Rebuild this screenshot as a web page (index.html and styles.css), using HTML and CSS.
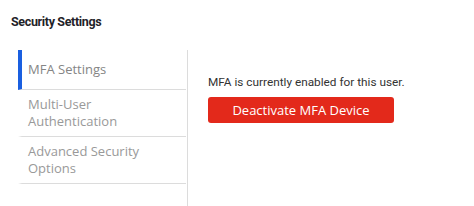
FILE: index.html
```html
<!DOCTYPE html>
<html lang="en">
<head>
    <meta charset="UTF-8">
    <title>Security Settings</title>
    <link rel="stylesheet" href="styles.css">
</head>
<body>

<div class="page">
    <h1 class="page-title">Security Settings</h1>

    <div class="settings">
        <!-- Side menu -->
        <ul class="side-menu">
            <li class="menu-item active">MFA Settings</li>
            <li class="menu-item">Multi-User<br>Authentication</li>
            <li class="menu-item">Advanced Security<br>Options</li>
        </ul>

        <!-- MFA panel -->
        <div class="panel">
            <p class="status">MFA is currently enabled for this user.</p>
            <button class="btn-danger">Deactivate MFA Device</button>
        </div>
    </div>
</div>

</body>
</html>
```

FILE: styles.css
```css
body {
    margin: 0;
    background-color: #ffffff;
    font-family: 'Roboto', sans-serif;
}

.page {
    padding: 14px 0 0 11px;
}

.page-title {
    margin: 0;
    font-size: 12.5px;
    font-weight: 700;
    letter-spacing: -0.35px;
    color: #1f2328;
    line-height: 16px;
}

.settings {
    display: flex;
    margin-top: 20px;
    margin-left: 7px;
}

.side-menu {
    list-style: none;
    margin: 0;
    padding: 0;
    width: 169px;
    min-height: 156px;
    border-right: 1px solid #dcdcdc;
}

.menu-item {
    font-family: 'Open Sans', sans-serif;
    font-size: 13px;
    line-height: 17px;
    color: #999999;
    padding: 6px;
    border-left: 4px solid transparent;
    border-bottom: 1px solid #dcdcdc;
    margin-right: 1px;
}

.menu-item.active {
    padding: 11px 6px;
    border-left-color: #1a5fe0;
    color: #858585;
}

.panel {
    padding: 24px 0 0 20px;
}

.status {
    margin: 0;
    font-size: 11.8px;
    line-height: 16px;
    color: #333333;
}

.btn-danger {
    margin-top: 7px;
    width: 186px;
    height: 26px;
    background-color: #e3291b;
    color: #ffffff;
    border: none;
    border-radius: 3px;
    font-family: 'Open Sans', sans-serif;
    font-size: 13px;
    cursor: pointer;
}
```
